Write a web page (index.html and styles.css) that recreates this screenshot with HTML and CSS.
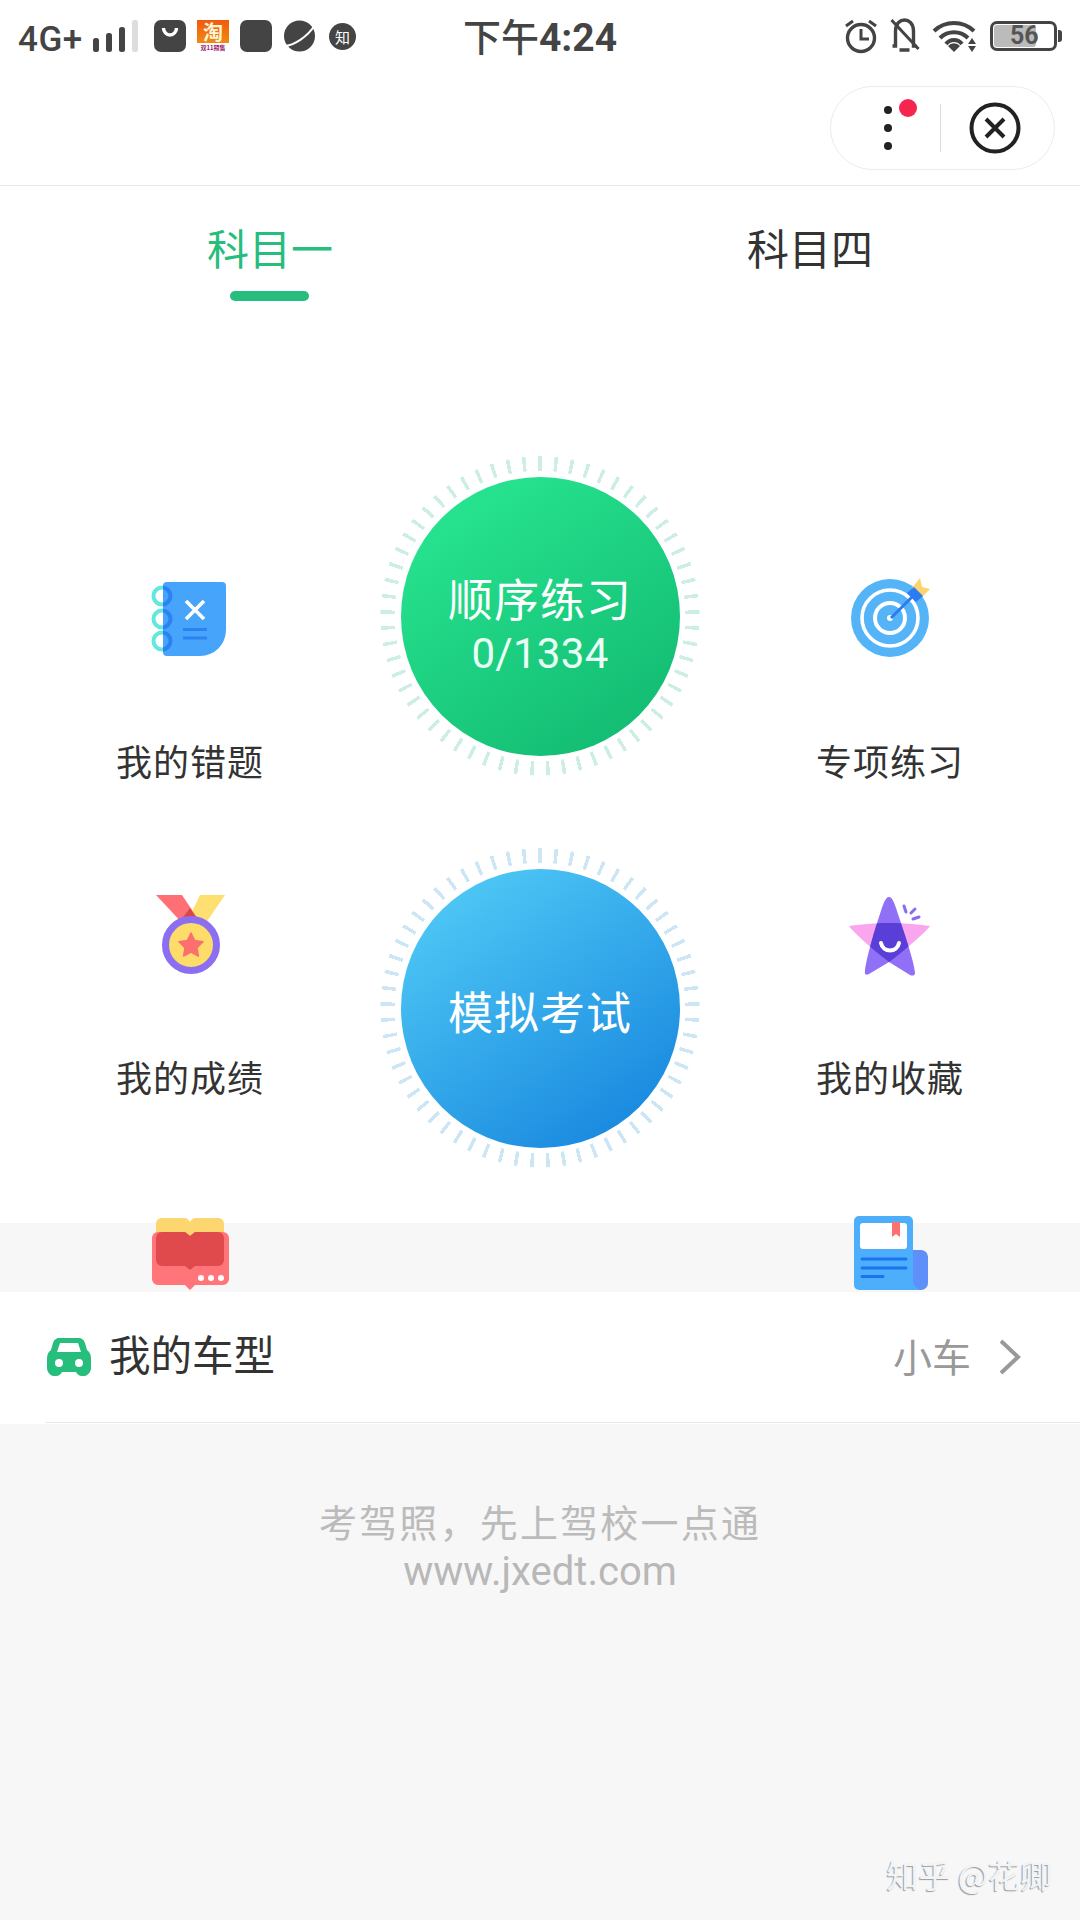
FILE: index.html
```html
<!DOCTYPE html>
<html lang="zh">
<head>
<meta charset="utf-8">
<title>驾校一点通</title>
<link rel="stylesheet" href="styles.css">
</head>
<body>
<div class="page">
  <header class="status">
    <div class="status-left">
      <span class="net">4G+</span>
      <svg class="signal" viewBox="93 20 45 32"><rect x="93" y="38" width="6" height="14" rx="2.500" fill="#444"/><rect x="106" y="33" width="6" height="19" rx="2.500" fill="#444"/><rect x="119" y="27" width="6" height="25" rx="2.500" fill="#444"/><rect x="132" y="20" width="6" height="32" rx="2.500" fill="#ddd"/></svg>
      <svg class="app" viewBox="0 0 32 32"><rect width="32" height="32" rx="7" fill="#444"/><path d="M9.500 8a6.500 7 0 0 0 13 0" fill="none" stroke="#fff" stroke-width="3.400"/></svg>
      <div class="tb"><span class="tb-big">淘</span><span class="tb-small">双11预售</span></div>
      <svg class="app" viewBox="0 0 32 32"><rect width="32" height="32" rx="7" fill="#444"/></svg>
      <svg class="app planet" viewBox="0 0 32 32"><circle cx="15.500" cy="16" r="15.500" fill="#444"/><path d="M0 26C10 26 24 16 31 5" fill="none" stroke="#fff" stroke-width="2"/></svg>
      <span class="zhi">知</span>
    </div>
    <div class="clock">下午<b>4:24</b></div>
    <div class="status-right">
      <svg class="st-ic" viewBox="835 18 32 36"><circle cx="851" cy="38" r="13.500" fill="none" stroke="#444" stroke-width="3.400"/><path d="M851 29v10h8M836 26l7-5M866 26l-7-5" fill="none" stroke="#444" stroke-width="3"/></svg>
      <svg class="st-ic bell" viewBox="878 18 30 36"><path d="M881 46h3v-15c0-8 5-11 9-11s9 3 9 11v15h3M888 50h10" fill="none" stroke="#444" stroke-width="3.400"/><path d="M880 20l27 29" stroke="#444" stroke-width="3"/></svg>
      <svg class="st-ic wifi" viewBox="918 18 44 36"><path d="M920 31a29 29 0 0 1 40 0M926 38a20 20 0 0 1 28 0M932 44a10 10 0 0 1 16 0" fill="none" stroke="#444" stroke-width="4"/><path d="M934 46a8 8 0 0 1 12 0l-6 6z" fill="#444"/><path d="M958 38l4 6h-8zM958 52l4-6h-8z" fill="#444"/></svg>
      <div class="battery"><span class="batt-fill"></span><span class="batt-num">56</span></div>
    </div>
  </header>

  <nav class="navbar">
    <div class="capsule">
      <div class="more"><i></i><i></i><i></i><em></em></div>
      <span class="cap-div"></span>
      <svg class="close" viewBox="0 0 52 52"><circle cx="26" cy="26" r="23.500" fill="none" stroke="#222" stroke-width="4"/><path d="M17 17l18 18M35 17L17 35" stroke="#222" stroke-width="4"/></svg>
    </div>
  </nav>

  <div class="tabs">
    <div class="tab active">科目一</div>
    <div class="tab">科目四</div>
  </div>

  <main class="board">
    <section class="side">
      <div class="tool">
        <svg class="tool-ic" viewBox="148 577 84 84">
          <defs><clipPath id="nb"><rect x="163" y="577" width="70" height="84"/></clipPath></defs>
          <g fill="none" stroke="#62e8dc" stroke-width="4"><circle cx="162" cy="596" r="8.500"/><circle cx="162" cy="619" r="8.500"/><circle cx="162" cy="641" r="8.500"/></g>
          <path d="M167 582h55a4 4 0 0 1 4 4v44a26 26 0 0 1-26 26h-33a4 4 0 0 1-4-4v-66a4 4 0 0 1 4-4z" fill="#47a4fb"/>
          <g fill="none" stroke="#2c82f3" stroke-width="4" clip-path="url(#nb)"><circle cx="162" cy="596" r="8.500"/><circle cx="162" cy="619" r="8.500"/><circle cx="162" cy="641" r="8.500"/></g>
          <path d="M186 601l18 18M204 601l-18 18" stroke="#fff" stroke-width="3.600"/>
          <path d="M183 629.500h24M183 638h24" stroke="#2c82f3" stroke-width="3"/>
        </svg>
        <span class="tool-label">我的错题</span>
      </div>
      <div class="tool">
        <svg class="tool-ic" viewBox="148 891 84 84">
          <path d="M156 893h26l16 24-13 7z" fill="#ff7076"/>
          <path d="M200 893h25l-24 35-13-10z" fill="#fde071"/>
          <path d="M190 906l8 11-8 8-9-7z" fill="#d9474d"/>
          <circle cx="191" cy="943" r="25.500" fill="#fddc6a" stroke="#8b6ff0" stroke-width="7"/>
          <path d="M191 931l3.700 7.600 8.300 1.200-6 5.900 1.400 8.300-7.400-3.900-7.400 3.900 1.400-8.300-6-5.900 8.300-1.200z" fill="#fb6f6f" stroke="#fb6f6f" stroke-width="1.500" stroke-linejoin="round"/>
        </svg>
        <span class="tool-label">我的成绩</span>
      </div>
    </section>

    <section class="center">
      <div class="ring green">
        <div class="disc"><span class="disc-title">顺序练习</span><span class="disc-count">0/1334</span></div>
      </div>
      <div class="ring blue">
        <div class="disc"><span class="disc-title">模拟考试</span></div>
      </div>
    </section>

    <section class="side">
      <div class="tool">
        <svg class="tool-ic" viewBox="848 577 84 84">
          <circle cx="890" cy="618" r="39" fill="#55b4f8"/>
          <circle cx="890" cy="618" r="28" fill="none" stroke="#fff" stroke-width="3.600"/>
          <circle cx="890" cy="618" r="15" fill="none" stroke="#fff" stroke-width="4"/>
          <circle cx="890" cy="618" r="3" fill="#fff"/>
          <path d="M920 578l2 9 8 2-8 8-10-9z" fill="#fdd36c"/>
          <path d="M891 618l22-22" stroke="#2c7bf2" stroke-width="3"/>
          <path d="M914 587l9 9-7 6-9-9z" fill="#2c7bf2"/>
        </svg>
        <span class="tool-label">专项练习</span>
      </div>
      <div class="tool">
        <svg class="tool-ic" viewBox="848 893 84 84">
          <defs><clipPath id="st"><path d="M889 897c4 0 6 8 10 20 6 18 16 48 16 56 0 3-3 3-5 2l-21-13-20 12c-2 1-5 1-4-2 0-8 8-37 14-55 4-12 6-20 10-20z"/></clipPath></defs>
          <path d="M849 926c15-2 27-3 40-3s27 1 41 3c-4 6-25 24-41 36-16-12-36-30-40-36z" fill="#f9a6ee"/>
          <path d="M889 897c4 0 6 8 10 20 6 18 16 48 16 56 0 3-3 3-5 2l-21-13-20 12c-2 1-5 1-4-2 0-8 8-37 14-55 4-12 6-20 10-20z" fill="#9070f6"/>
          <path d="M849 926c15-2 27-3 40-3s27 1 41 3c-4 6-25 24-41 36-16-12-36-30-40-36z" fill="#5a3ed8" clip-path="url(#st)"/>
          <path d="M881 943c2 10 16 10 18 0" fill="none" stroke="#fff" stroke-width="4" stroke-linecap="round"/>
          <path d="M904 906l2 6M915 909l-4 4M913 919l6-2" stroke="#8a6cf0" stroke-width="3" stroke-linecap="round"/>
        </svg>
        <span class="tool-label">我的收藏</span>
      </div>
    </section>
  </main>

  <div class="band">
    <svg class="band-ic" viewBox="148 1216 84 76">
      <path d="M162 1218h22c3 0 5 2 6 4 1-2 3-4 6-4h22c3 0 6 2 6 6v12h-68v-12c0-4 3-6 6-6z" fill="#fdd66f"/>
      <path d="M158 1232h27l5 4 5-4h28a6 6 0 0 1 6 6v41a6 6 0 0 1-6 6h-28l-5 5-5-5h-27a6 6 0 0 1-6-6v-41a6 6 0 0 1 6-6z" fill="#ff7579"/>
      <path d="M162 1232h23l5 4 5-4h23a6 6 0 0 1 6 6v22a6 6 0 0 1-6 6h-23l-5 4-5-4h-23a6 6 0 0 1-6-6v-22a6 6 0 0 1 6-6z" fill="#e04a4c"/>
      <g fill="#fff"><circle cx="201" cy="1278" r="3"/><circle cx="211" cy="1278" r="3"/><circle cx="221" cy="1278" r="3"/></g>
    </svg>
    <svg class="band-ic" viewBox="848 1216 84 76">
      <path d="M905 1250h16a7 7 0 0 1 7 7v26a7 7 0 0 1-7 7h-16z" fill="#5f8ff8"/>
      <path d="M859 1216h49a5 5 0 0 1 5 5v59a10 10 0 0 0 8 10h-62a5 5 0 0 1-5-5v-64a5 5 0 0 1 5-5z" fill="#4daefb"/>
      <rect x="860" y="1223" width="47" height="26" rx="3" fill="#fff"/>
      <path d="M892 1222h8v15l-4-3-4 3z" fill="#ff7070"/>
      <path d="M862 1259h44M862 1268h44M862 1276.500h21" stroke="#1b73f0" stroke-width="3" stroke-linecap="round"/>
    </svg>
  </div>

  <section class="car-row">
    <div class="car-inner">
      <svg class="car-ic" viewBox="47 1339 44 38"><path d="M60 1339h18c4 0 6 2 7 5l2 7c3 2 4 5 4 9v9c0 4-3 7-6 8h-3c-3 0-5-2-6-4H62c-1 2-3 4-6 4h-3c-3-1-6-4-6-8v-9c0-4 1-7 4-9l2-7c1-3 3-5 7-5z" fill="#27bd7c"/><path d="M60 1344h18l3 9H57z" fill="#fff"/><circle cx="59" cy="1364" r="4" fill="#fff"/><circle cx="79" cy="1364" r="4" fill="#fff"/></svg>
      <span class="car-label">我的车型</span>
      <span class="car-value">小车</span>
      <svg class="chev" viewBox="0 0 22 36"><path d="M2 2l17 16L2 34" fill="none" stroke="#999" stroke-width="4"/></svg>
    </div>
  </section>

  <footer class="foot">
    <p class="slogan">考驾照<span class="punct">，</span>先上驾校一点通</p>
    <p class="site">www.jxedt.com</p>
    <span class="mark">知乎 @花卿</span>
  </footer>
</div>
</body>
</html>
```
FILE: styles.css
```css
* { box-sizing: border-box; }
html, body { margin: 0; padding: 0; }
body { width: 1080px; height: 1920px; overflow: hidden; background: #fff; font-family: "Noto Sans CJK SC", "Noto Sans", sans-serif; color: #333; }
.page { width: 1080px; height: 1920px; display: flex; flex-direction: column; background: #f7f7f7; }

.status { height: 66px; background: #fff; display: grid; grid-template-columns: 1fr auto 1fr; align-items: start; flex: none; }
.status-left { display: flex; align-items: flex-start; padding: 20px 0 0 18px; }
.net { font: 500 35px/36px "Roboto", sans-serif; letter-spacing: .5px; color: #444; margin-top: 2px; width: 75px; white-space: nowrap; }
.signal { width: 45px; height: 32px; margin-right: 16px; }
.app { width: 32px; height: 32px; margin-right: 11px; }
.planet { margin-left: 1px; margin-right: 13px; }
.tb { width: 32px; height: 32px; margin-right: 11px; display: flex; flex-direction: column; align-items: center; }
.tb-big { width: 32px; height: 23px; background: linear-gradient(#f2590f, #f08a10); color: #fff6d8; font-size: 20px; font-weight: 700; line-height: 23px; text-align: center; }
.tb-small { font-size: 6px; font-weight: 700; line-height: 9px; color: #a0186a; white-space: nowrap; }
.zhi { width: 27px; height: 27px; margin-top: 3px; border-radius: 50%; background: #444; color: #fff; font-size: 15px; line-height: 27px; text-align: center; }
.clock { font-size: 38px; line-height: 44px; padding-top: 13px; color: #444; font-weight: 500; white-space: nowrap; }
.clock b { font: 700 39px/44px "Roboto", sans-serif; }
.status-right { display: flex; align-items: flex-start; justify-content: flex-end; padding: 18px 23px 0 0; }
.st-ic { width: 32px; height: 36px; }
.bell { width: 31px; margin-left: 12px; }
.wifi { width: 46px; margin-left: 11px; margin-right: 13px; }
.battery { position: relative; width: 67px; height: 30px; margin-top: 3px; border: 3px solid #444; border-radius: 7px; }
.battery::after { content: ""; position: absolute; right: -8px; top: 6px; width: 4px; height: 12px; background: #444; border-radius: 0 3px 3px 0; }
.batt-fill { position: absolute; left: 1px; top: 1px; bottom: 1px; width: 42px; background: #bbb; border-radius: 3px; }
.batt-num { position: absolute; left: 17px; top: 0; font: 700 25px/24px "Roboto", sans-serif; color: #555; }

.navbar { height: 120px; background: #fff; border-bottom: 1px solid #e6e6e6; display: flex; justify-content: flex-end; align-items: flex-start; padding: 20px 25px 0 0; flex: none; }
.capsule { width: 225px; height: 84px; border: 1px solid #ececec; border-radius: 42px; display: flex; align-items: center; padding-left: 51px; }
.more { position: relative; width: 12px; height: 44px; display: flex; flex-direction: column; justify-content: space-between; align-items: center; }
.more i { width: 8px; height: 8px; border-radius: 50%; background: #222; }
.more em { position: absolute; left: 17px; top: -7px; width: 18px; height: 18px; border-radius: 50%; background: #f5254f; }
.cap-div { width: 1px; height: 48px; background: #dcdcdc; margin-left: 46px; }
.close { width: 52px; height: 52px; margin-left: 28px; }

.tabs { display: grid; grid-template-columns: 1fr 1fr; height: 129px; background: #fff; flex: none; }
.tab { position: relative; text-align: center; font-size: 42px; line-height: 56px; padding-top: 33px; color: #333; }
.tab.active { color: #27bd7c; }
.tab.active::after { content: ""; position: absolute; left: 230px; top: 105px; width: 79px; height: 10px; border-radius: 5px; background: #27bd7c; }

.board { display: grid; grid-template-columns: 380px 320px 380px; height: 908px; background: #fff; flex: none; }
.side { display: flex; flex-direction: column; align-items: center; gap: 108px; padding-top: 262px; }
.tool { display: flex; flex-direction: column; align-items: center; gap: 74px; }
.tool-ic { width: 84px; height: 84px; display: block; }
.tool-label { font-size: 36px; line-height: 50px; letter-spacing: 1px; color: #333; white-space: nowrap; }
.center { display: flex; flex-direction: column; gap: 72px; padding-top: 141px; }
.ring { width: 320px; height: 320px; position: relative; display: flex; align-items: center; justify-content: center; }
.ring::before { content: ""; position: absolute; inset: 0; border-radius: 50%; -webkit-mask: radial-gradient(circle, transparent 145px, #000 145.500px, #000 159.500px, transparent 160px); mask: radial-gradient(circle, transparent 145px, #000 145.500px, #000 159.500px, transparent 160px); }
.green::before { background: repeating-conic-gradient(from -0.650deg, #cdeee2 0 1.300deg, transparent 1.300deg 5.9016deg); }
.blue::before { background: repeating-conic-gradient(from -0.650deg, #cce6f6 0 1.300deg, transparent 1.300deg 5.9016deg); }
.disc { position: relative; width: 279px; height: 279px; border-radius: 50%; display: flex; flex-direction: column; align-items: center; justify-content: center; color: #fff; }
.green .disc { background: linear-gradient(145deg, #2aea94, #10b66e); padding-top: 21px; }
.blue .disc { background: linear-gradient(145deg, #56d0f8, #1180dc); padding-top: 5px; }
.disc-title { font-size: 45px; line-height: 52px; letter-spacing: 1px; white-space: nowrap; }
.disc-count { font: 42px/56px "Roboto", sans-serif; letter-spacing: .3px; color: #eafff6; margin-top: 2px; }

.band { height: 69px; flex: none; background: #f7f7f7; display: flex; justify-content: space-between; padding: 0 148px; }
.band-ic { width: 84px; height: 76px; margin-top: -7px; display: block; }

.car-row { height: 132px; background: #fff; padding-left: 46px; flex: none; }
.car-inner { height: 131px; border-bottom: 1px solid #e6e6e6; display: flex; align-items: center; }
.car-ic { width: 44px; height: 38px; margin-left: 1px; }
.car-label { font-size: 41.500px; line-height: 56px; margin: 0 0 9px 18px; color: #333; }
.car-value { font-size: 39px; line-height: 56px; margin: 0 0 4px auto; color: #999; }
.chev { width: 22px; height: 36px; margin: 0 59px 0 28px; }

.foot { flex: 1; display: flex; flex-direction: column; align-items: center; color: #bbb; }
.foot p { margin: 0; }
.slogan { font-size: 38px; line-height: 48px; letter-spacing: 2.200px; margin-top: 73px !important; }
.punct { font-family: "Noto Sans CJK TC", sans-serif; }
.site { font: 40px/50px "Roboto", sans-serif; color: #b8b8b8; margin-top: 2px !important; }
.mark { margin-top: auto; align-self: flex-end; margin-right: 28px; margin-bottom: 24px; font-size: 32px; line-height: 44px; color: #f4f4f4; text-shadow: -1px 1px 1px #999; }
```
